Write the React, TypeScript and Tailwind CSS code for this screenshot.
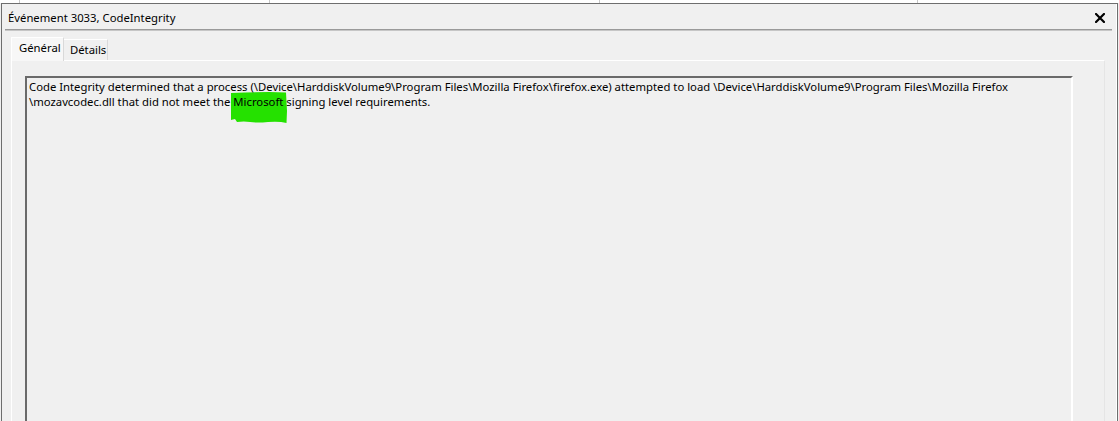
import React from "react";

export default function App() {
  const font = { fontFamily: '"Noto Sans", "Open Sans", sans-serif' };
  return (
    <div
      className="w-[1119px] h-[421px] bg-[#f0f0f0] overflow-hidden text-[11.3px] text-black flex flex-col"
      style={font}
    >
      {/* strip of window behind */}
      <div className="h-[3px] bg-white flex shrink-0">
        <div className="w-[20px] border-r border-[#c8c8c8]" />
        <div className="w-[250px] border-r border-[#c8c8c8]" />
        <div className="w-[330px] border-r border-[#c8c8c8]" />
        <div className="w-[318px] border-r border-[#c8c8c8]" />
        <div className="flex-1" />
      </div>
      {/* window */}
      <div className="flex-1 mx-[1px] border-t border-l border-r border-[#6e6e6e] flex flex-col min-h-0">
        <div className="flex-1 border-r border-white flex flex-col min-h-0">
          {/* title */}
          <div className="h-[25px] flex items-center justify-between pl-[6px] pr-[11px] shrink-0">
            <span className="leading-none pt-[2px]">Événement 3033, CodeIntegrity</span>
            <svg width="10" height="10" viewBox="0 0 10 10" className="mt-[2px]">
              <path d="M1 1 L9 9 M9 1 L1 9" stroke="#000" strokeWidth="2.2" strokeLinecap="square" />
            </svg>
          </div>
          <div className="ml-[3px] mr-[4px] h-[2px] border-t border-[#9a9a9a] bg-[#c6c6c6] shrink-0" />
          {/* tabs */}
          <div className="flex items-end pl-[9px] pt-[6px] shrink-0">
            <div className="h-[24px] w-[53px] bg-[#f7f7f7] border-t border-l border-r border-[#d9d9d9] border-t-white border-l-white flex items-center pl-[7px] pb-[2px] relative z-10 -mb-[1px]">
              Général
            </div>
            <div className="h-[21px] w-[44px] bg-[#f0f0f0] border-t border-r border-[#d9d9d9] border-t-white flex items-center pl-[6px]">
              Détails
            </div>
          </div>
          {/* tab panel */}
          <div className="flex-1 ml-[9px] mr-[11px] border-l border-t border-r border-white border-r-[#e5e5e5] flex flex-col min-h-0 pt-[15px] pl-[13px] pr-[31px]">
            <div className="flex-1 border-t-2 border-l-2 border-t-[#6a6a6a] border-l-[#6a6a6a] border-r-2 border-r-white relative min-h-0">
              <svg
                className="absolute left-[204px] top-[13px] z-0"
                width="57"
                height="34"
                viewBox="0 0 57 34"
              >
                <path
                  d="M0 2 L14 1.5 L38 1 L55 1.5 L56 20 L55.5 32 Q48 30 37 31 Q26 32 19 31 Q13 30 6 31 L4 28 L0 29 Z"
                  fill="#25e100"
                />
              </svg>
              <div className="relative z-10 pl-[2px] pt-[1px] leading-[15px] whitespace-nowrap">
                Code Integrity determined that a process (\Device\HarddiskVolume9\Program Files\Mozilla Firefox\firefox.exe) attempted to load \Device\HarddiskVolume9\Program Files\Mozilla Firefox
                <br />
                \mozavcodec.dll that did not meet the Microsoft signing level requirements.
              </div>
            </div>
          </div>
        </div>
      </div>
    </div>
  );
}
